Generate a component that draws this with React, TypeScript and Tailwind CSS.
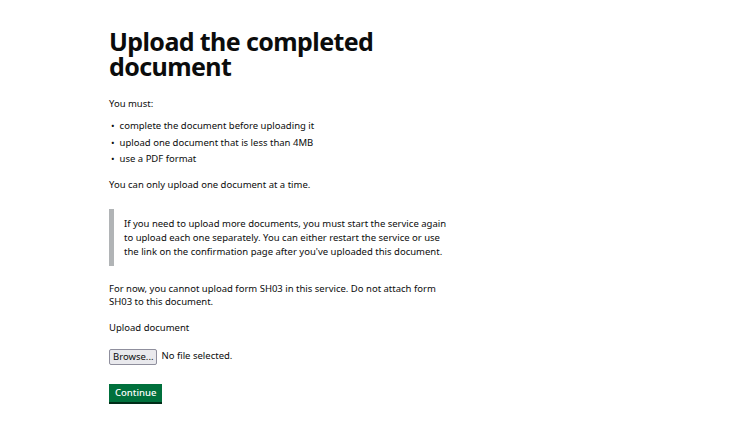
import { useState } from "react"

export default function App() {
  const [fileName, setFileName] = useState<string | null>(null)

  return (
    <div className="min-h-[438px] w-full bg-white text-[#0b0c0c] [font-family:'Noto_Sans',Arial,sans-serif]">
      <main className="pl-[109px] pt-[29px] w-[342px] box-content">
        <h1 className="text-[25px] leading-[25px] font-bold tracking-[-0.6px] w-[290px]">
          Upload the completed document
        </h1>

        <p className="mt-[18px] text-[9.5px] leading-[14px]">You must:</p>

        <ul className="mt-[7px] text-[9.5px] leading-[16.5px]">
          <li className="flex gap-[5px] pl-[2px]">
            <span>•</span>complete the document before uploading it
          </li>
          <li className="flex gap-[5px] pl-[2px]">
            <span>•</span>upload one document that is less than 4MB
          </li>
          <li className="flex gap-[5px] pl-[2px]">
            <span>•</span>use a PDF format
          </li>
        </ul>

        <p className="mt-[10px] text-[9.5px] leading-[14px]">
          You can only upload one document at a time.
        </p>

        {/* Inset text */}
        <div className="mt-[17px] border-l-[5px] border-[#b1b4b6] pl-[10px] pt-[8px] pb-[7px] text-[9.5px] leading-[14px]">
          If you need to upload more documents, you must start the service again to upload
          each one separately. You can either restart the service or use the link on the
          confirmation page after you've uploaded this document.
        </div>

        <p className="mt-[16.5px] text-[9.5px] leading-[13px]">
          For now, you cannot upload form SH03 in this service. Do not attach form SH03 to
          this document.
        </p>

        <label className="block mt-[12.5px] text-[9.5px] leading-[14px]">Upload document</label>

        <div className="mt-[14px] flex items-center gap-[4px] text-[9.5px]">
          <label className="cursor-pointer rounded-[2px] border border-[#8f8f9d] bg-[#e9e9ed] px-[3px] h-[16px] leading-[14px]">
            Browse...
            <input
              type="file"
              className="hidden"
              onChange={(e) => setFileName(e.target.files?.[0]?.name ?? null)}
            />
          </label>
          <span>{fileName ?? "No file selected."}</span>
        </div>

        <button className="block mt-[19px] bg-[#00703c] text-white text-[9.5px] font-medium px-[6px] h-[18px] leading-[18px] shadow-[0_2px_0_#002d18]">
          Continue
        </button>
      </main>
    </div>
  )
}
